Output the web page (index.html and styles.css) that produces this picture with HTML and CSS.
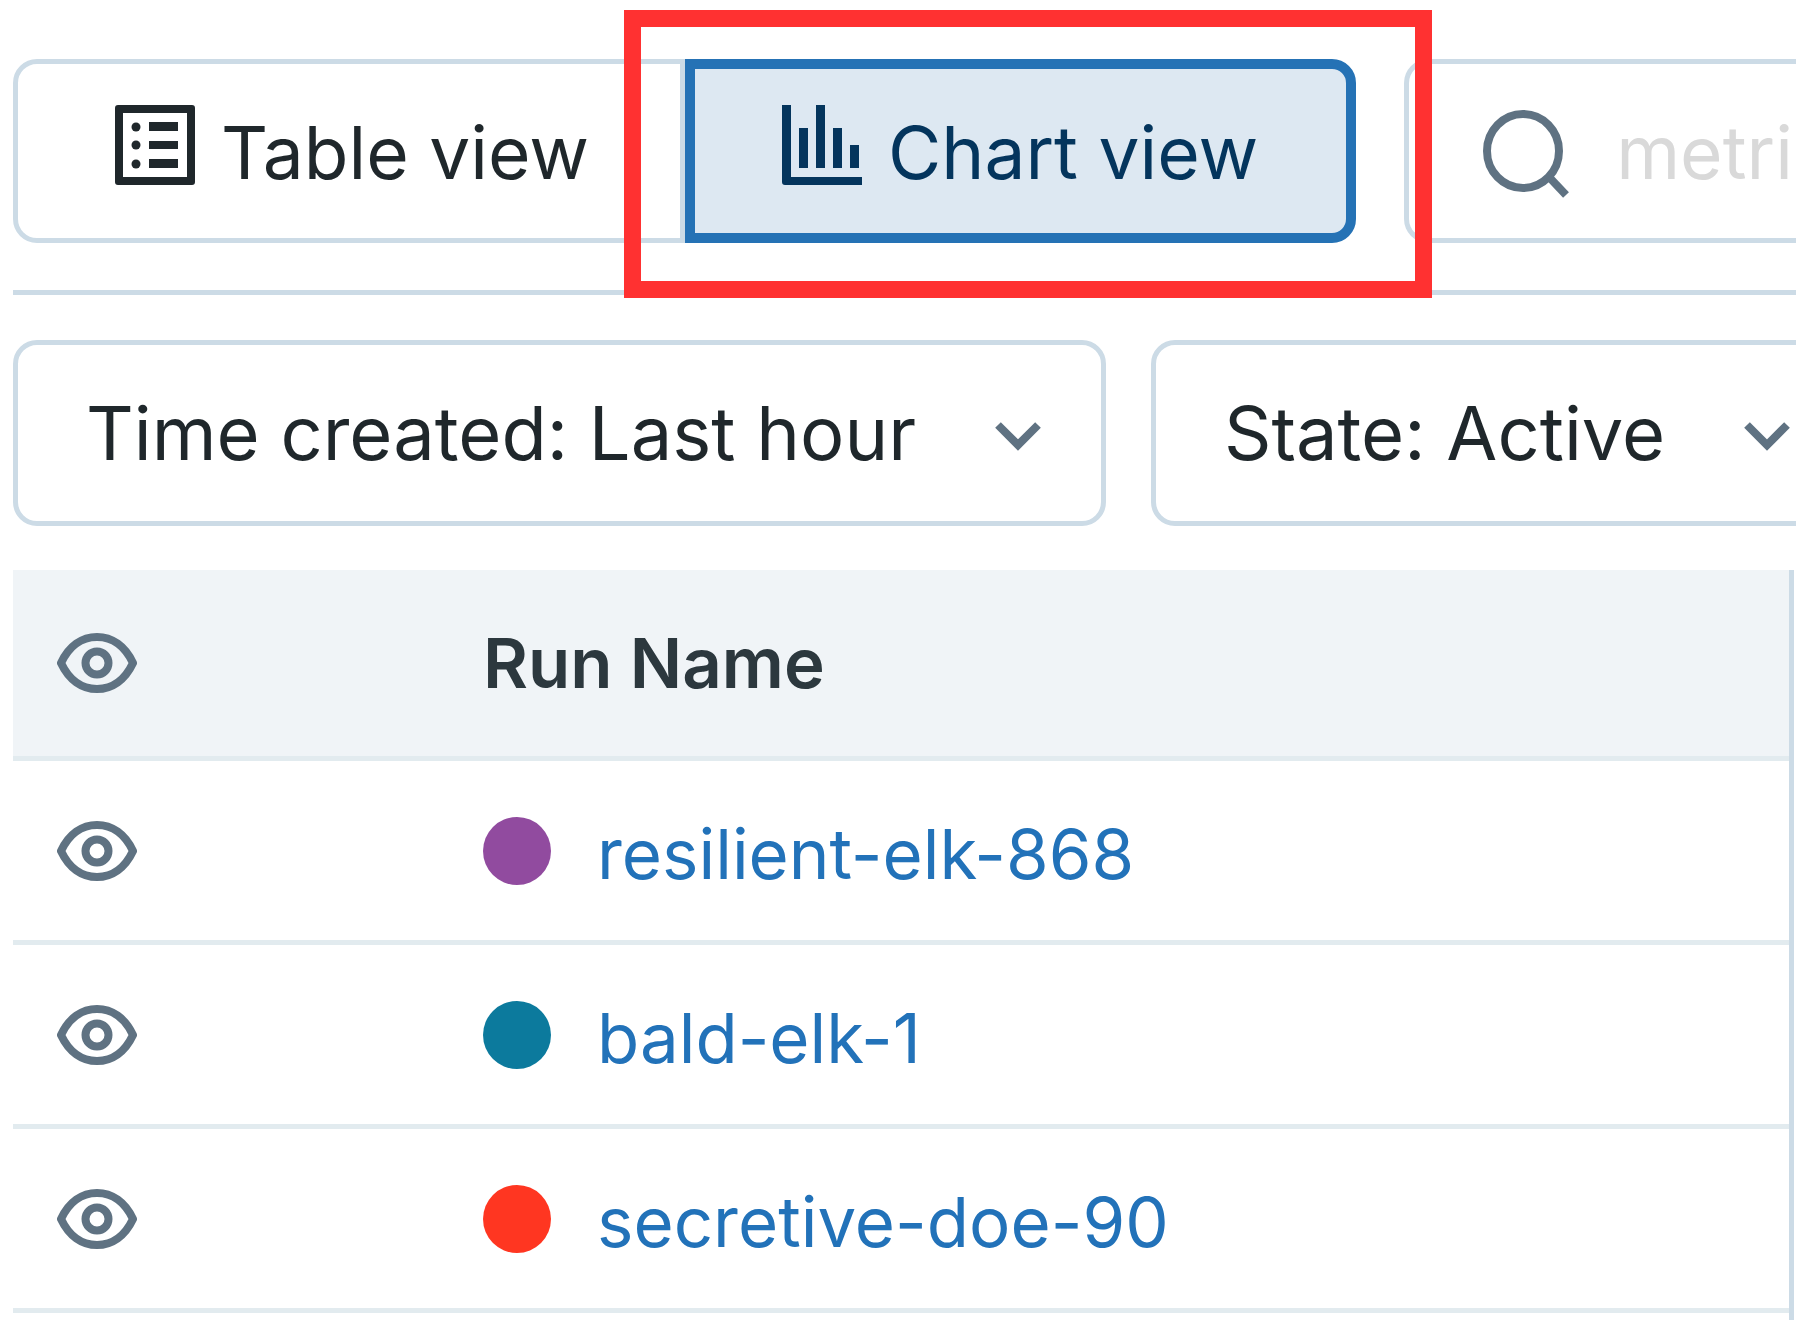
FILE: index.html
```html
<!DOCTYPE html>
<html lang="en">
  <head>
    <meta charset="utf-8" />
    <meta name="viewport" content="width=device-width, initial-scale=1.0" />
    <title>Runs</title>
    <link rel="stylesheet" href="styles.css">
  </head>

  <body>
    <!-- shared icon -->
    <svg class="sprite" aria-hidden="true">
      <symbol id="eye" viewBox="0 0 80 60">
        <path d="M4 30C12 13 25 4 40 4s28 9 36 26c-8 17-21 26-36 26S12 47 4 30Z" />
        <circle cx="40" cy="30" r="11.5" />
      </symbol>
    </svg>

    <main class="page">
      <div class="toolbar">
        <div class="views">
          <button class="view" aria-pressed="false">
            <svg class="view-icon" viewBox="0 0 80 80" aria-hidden="true">
              <path fill-rule="evenodd" d="M3 0h74a3 3 0 0 1 3 3v74a3 3 0 0 1-3 3H3a3 3 0 0 1-3-3V3a3 3 0 0 1 3-3ZM8 8v64h64V8Z" />
              <path d="M34 17h29v9H34ZM34 36h29v8H34ZM34 54h29v9H34Z" />
              <circle cx="21" cy="22" r="4.5" />
              <circle cx="21" cy="40" r="4.5" />
              <circle cx="21" cy="59" r="4.5" />
            </svg>
            Table view
          </button>
          <div class="highlight">
            <button class="view valgt" aria-pressed="true">
              <svg class="view-icon" viewBox="0 0 80 80" aria-hidden="true">
                <path d="M0 0h9v72h71v8H3a3 3 0 0 1-3-3ZM17 23h9v40h-9ZM34 0h9v63h-9ZM51 23h9v40h-9ZM68 40h9v23h-9Z" />
              </svg>
              Chart view
            </button>
          </div>
        </div>
        <label class="search">
          <svg class="search-icon" viewBox="0 0 88 92" aria-hidden="true">
            <ellipse cx="40" cy="42" rx="36" ry="37" />
            <path d="M66 68l17 18" />
          </svg>
          <input type="text" placeholder="metri" aria-label="Search runs">
        </label>
      </div>

      <div class="filters">
        <div class="filter">
          <select aria-label="Time created">
            <option>Time created: Last hour</option>
          </select>
          <svg class="chevron" viewBox="0 0 46 30" aria-hidden="true"><path d="M3 4l20 20L43 4" /></svg>
        </div>
        <div class="filter">
          <select aria-label="State">
            <option>State: Active</option>
          </select>
          <svg class="chevron" viewBox="0 0 46 30" aria-hidden="true"><path d="M3 4l20 20L43 4" /></svg>
        </div>
      </div>

      <div class="runs">
        <table>
          <thead>
            <tr>
              <th class="visibility"><button class="toggle" aria-label="Toggle all runs"><svg class="eye"><use href="#eye" /></svg></button></th>
              <th>Run Name</th>
            </tr>
          </thead>
          <tbody>
            <tr>
              <td><button class="toggle" aria-label="Toggle resilient-elk-868"><svg class="eye"><use href="#eye" /></svg></button></td>
              <td><div class="run"><span class="dot purple"></span><a href="#">resilient-elk-868</a></div></td>
            </tr>
            <tr>
              <td><button class="toggle" aria-label="Toggle bald-elk-1"><svg class="eye"><use href="#eye" /></svg></button></td>
              <td><div class="run"><span class="dot teal"></span><a href="#">bald-elk-1</a></div></td>
            </tr>
            <tr>
              <td><button class="toggle" aria-label="Toggle secretive-doe-90"><svg class="eye"><use href="#eye" /></svg></button></td>
              <td><div class="run"><span class="dot red"></span><a href="#">secretive-doe-90</a></div></td>
            </tr>
          </tbody>
        </table>
      </div>
    </main>
  </body>
</html>
```
FILE: styles.css
```css
* {
  box-sizing: border-box;
}

body {
  margin: 0;
  background-color: white;
  color: #1f272b;
  font-family: Inter, sans-serif;
}

button,
input,
select {
  font: inherit;
  color: inherit;
}

.sprite {
  display: none;
}

.page {
  margin: 0 8px 0 13px;
  padding-top: 59px;
  overflow: hidden;
}

/* toolbar */
.toolbar {
  display: flex;
  gap: 48px;
  padding-bottom: 47px;
  border-bottom: 5px solid #ccdbe6;
  font-size: 73px;
}

.views {
  display: flex;
  flex: none;
}

.view {
  display: flex;
  align-items: center;
  gap: 26px;
  height: 184px;
  padding: 2px 91px 0 97px;
  border: 5px solid #ccdbe6;
  border-radius: 24px 0 0 24px;
  background-color: white;
  white-space: nowrap;
  cursor: pointer;
}

.view.valgt {
  padding: 2px 88px 0 87px;
  border: 10px solid #2572b5;
  border-radius: 0 24px 24px 0;
  background-color: #dde8f2;
  color: #04355d;
}

.view-icon {
  width: 80px;
  height: 80px;
  margin-bottom: 15px;
  fill: currentColor;
}

/* red frame round the selected view */
.highlight {
  position: relative;
}

.highlight::after {
  content: "";
  position: absolute;
  z-index: 1;
  inset: -49px -76px -55px -61px;
  border: 17px solid #ff3131;
  pointer-events: none;
}

.search {
  display: flex;
  flex: 1;
  align-items: center;
  gap: 45px;
  height: 184px;
  min-width: 0;
  padding: 2px 0 0 74px;
  border: 5px solid #ccdbe6;
  border-right: 0;
  border-radius: 24px 0 0 24px;
}

.search-icon {
  flex: none;
  width: 88px;
  height: 92px;
  margin-top: 6px;
  fill: none;
  stroke: #5f7282;
  stroke-width: 8px;
}

.search input {
  flex: 1;
  min-width: 0;
  padding: 0;
  border: 0;
  outline: 0;
  background: none;
}

.search input::placeholder {
  color: #d9d9d9;
}

/* filters */
.filters {
  display: flex;
  gap: 45px;
  padding: 45px 0 44px;
  font-size: 74px;
}

.filter {
  display: grid;
  flex: none;
  align-items: center;
}

.filter select,
.chevron {
  grid-area: 1 / 1;
}

.filter select {
  appearance: none;
  height: 186px;
  padding: 0 184px 0 68px;
  border: 5px solid #ccdbe6;
  border-radius: 24px;
  background-color: white;
  cursor: pointer;
}

.chevron {
  justify-self: end;
  width: 46px;
  height: 30px;
  margin: 5px 65px 0 0;
  fill: none;
  stroke: #5f7282;
  stroke-width: 8px;
  pointer-events: none;
}

/* run list */
.runs {
  margin-right: 2px;
  padding-bottom: 7px;
  border-right: 5px solid #ccdbe6;
  font-size: 69px;
}

table {
  width: 100%;
  border-collapse: separate;
  border-spacing: 0;
}

th,
td {
  height: 184px;
  padding: 0;
  border-bottom: 5px solid #e2ebef;
  text-align: left;
  vertical-align: middle;
}

th {
  height: 191px;
  background-color: #f0f4f7;
  color: #2c383e;
  font-weight: 600;
}

.visibility {
  width: 470px;
}

.toggle {
  display: block;
  margin-left: 44px;
  padding: 0;
  border: 0;
  background: none;
  cursor: pointer;
}

.eye {
  display: block;
  width: 80px;
  height: 60px;
  fill: none;
  stroke: #5f7282;
  stroke-width: 8px;
  stroke-linejoin: round;
}

.run {
  display: flex;
  align-items: center;
  gap: 46px;
}

.dot {
  width: 68px;
  height: 68px;
  border-radius: 50%;
}

.purple {
  background-color: #914b9f;
}

.teal {
  background-color: #0c7a9d;
}

.red {
  background-color: #ff3621;
}

.run a {
  padding-top: 6px;
  color: #2272b9;
  text-decoration: none;
}
```
